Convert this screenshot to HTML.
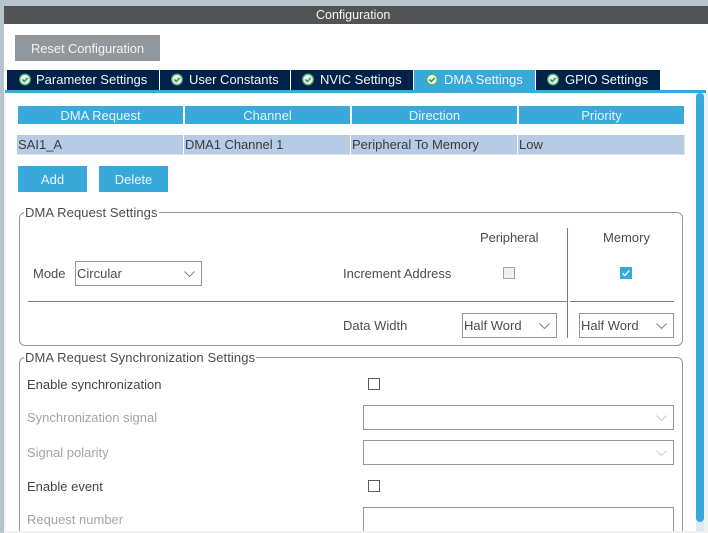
<!DOCTYPE html>
<html><head><meta charset="utf-8"><style>
html,body{margin:0;padding:0;background:#fff;width:708px;height:533px;overflow:hidden}
#w{position:absolute;left:0;top:0;width:708px;height:533px;overflow:hidden;font:13px/16px "Liberation Sans",Arial,sans-serif;color:#4f4a52}
.a{position:absolute;white-space:nowrap}
.box{position:absolute;box-sizing:border-box}
.tab{position:absolute;top:70px;height:20px;background:#002149;color:#f2f5f8;line-height:19px;white-space:nowrap}
.tab svg{position:absolute;left:0;top:3px}
.th{position:absolute;top:106px;height:18px;background:#39a9dc;color:#eaf5fb;text-align:center;line-height:20px}
.td{position:absolute;top:135px;height:19px;background:#b6cce4;color:#3d3a46;line-height:20px;padding-left:1px;box-sizing:border-box;white-space:nowrap}
.btn{position:absolute;top:166px;height:26px;width:69px;background:#39a9dc;color:#eaf5fb;text-align:center;line-height:28px}
.sel{position:absolute;box-sizing:border-box;border:1px solid #92979c;height:25px;background:#fff;line-height:23px;padding-left:1px;color:#4f4a52;white-space:nowrap}
.sel svg{position:absolute;right:6px;top:9px}
.l{position:absolute;white-space:nowrap;line-height:18px}
.g{color:#a5a3a8}
.d{color:#45414d}
.group{position:absolute;box-sizing:border-box;border:1px solid #92979c;border-radius:6px}
.leg{position:absolute;background:#fff;white-space:nowrap;padding:0 1px;line-height:18px;height:16px;letter-spacing:.09px}
.cb{position:absolute;box-sizing:border-box;width:12px;height:12px;border:1px solid #5c5c5c;background:#fff}
</style></head><body><div id="w">
<div class="box" style="left:4px;top:93px;width:2px;height:440px;background:#f0f2f4"></div>
<div class="box" style="left:0;top:0;width:708px;height:6px;background:#b8c4cc"></div>
<div class="box" style="left:0;top:0;width:4px;height:533px;background:#b8c4cc"></div>
<div class="box" style="left:4px;top:6px;width:704px;height:18px;background:#525354"></div>
<div class="a" style="left:316px;top:7px;color:#f4f4f4;font-size:12.5px">Configuration</div>

<div class="box" style="left:15px;top:35px;width:145px;height:26px;background:#92979c"></div>
<div class="a" style="left:31px;top:41px;color:#f2f3f4;letter-spacing:-.1px">Reset Configuration</div>

<div class="box" style="left:5px;top:90px;width:701px;height:3px;background:#39a9dc"></div>

<div class="tab" style="left:7px;width:152px"><svg style="left:10.500px" width="14" height="14" viewBox="0 0 14 14"><circle cx="7" cy="6.500" r="5.300" fill="#e9f4ec" stroke="#52ad70" stroke-width="1.300"/><path d="M4.300 6.500l2 2 3.400-3.600" fill="none" stroke="#3f9f60" stroke-width="1.700"/></svg><span class="a" style="left:29px;top:0">Parameter Settings</span></div>
<div class="tab" style="left:160px;width:130px"><svg style="left:10px" width="14" height="14" viewBox="0 0 14 14"><circle cx="7" cy="6.500" r="5.300" fill="#e9f4ec" stroke="#52ad70" stroke-width="1.300"/><path d="M4.300 6.500l2 2 3.400-3.600" fill="none" stroke="#3f9f60" stroke-width="1.700"/></svg><span class="a" style="left:29px;top:0">User Constants</span></div>
<div class="tab" style="left:291px;width:122px"><svg style="left:10px" width="14" height="14" viewBox="0 0 14 14"><circle cx="7" cy="6.500" r="5.300" fill="#e9f4ec" stroke="#52ad70" stroke-width="1.300"/><path d="M4.300 6.500l2 2 3.400-3.600" fill="none" stroke="#3f9f60" stroke-width="1.700"/></svg><span class="a" style="left:29px;top:0">NVIC Settings</span></div>
<div class="tab" style="left:414px;width:121px;background:#39a9dc"><svg style="left:11px" width="14" height="14" viewBox="0 0 14 14"><circle cx="7" cy="6.500" r="5.300" fill="#e9f4ec" stroke="#52ad70" stroke-width="1.300"/><path d="M4.300 6.500l2 2 3.400-3.600" fill="none" stroke="#3f9f60" stroke-width="1.700"/></svg><span class="a" style="left:30px;top:0">DMA Settings</span></div>
<div class="tab" style="left:536px;width:124px"><svg style="left:10px" width="14" height="14" viewBox="0 0 14 14"><circle cx="7" cy="6.500" r="5.300" fill="#e9f4ec" stroke="#52ad70" stroke-width="1.300"/><path d="M4.300 6.500l2 2 3.400-3.600" fill="none" stroke="#3f9f60" stroke-width="1.700"/></svg><span class="a" style="left:29px;top:0">GPIO Settings</span></div>

<div class="th" style="left:18px;width:165px">DMA Request</div>
<div class="th" style="left:185px;width:165px">Channel</div>
<div class="th" style="left:352px;width:165px">Direction</div>
<div class="th" style="left:519px;width:165px">Priority</div>

<div class="box" style="left:17px;top:154px;width:668px;height:1px;background:#dfe3e8"></div>
<div class="box" style="left:684px;top:135px;width:1px;height:20px;background:#dfe3e8"></div>
<div class="td" style="left:17px;width:166px">SAI1_A</div>
<div class="td" style="left:184px;width:166px;letter-spacing:-.05px">DMA1 Channel 1</div>
<div class="td" style="left:351px;width:166px">Peripheral To Memory</div>
<div class="td" style="left:518px;width:166px">Low</div>

<div class="btn" style="left:18px">Add</div>
<div class="btn" style="left:99px">Delete</div>

<div class="group" style="left:19px;top:212px;width:664px;height:134px"></div>
<div class="leg" style="left:24px;top:204px">DMA Request Settings</div>
<div class="l" style="left:33px;top:265px">Mode</div>
<div class="sel" style="left:75px;top:261px;width:127px">Circular<svg width="11" height="6" viewBox="0 0 11 6"><path d="M.5 .5l5 5 5-5" fill="none" stroke="#808080" stroke-width="1"/></svg></div>
<div class="l" style="left:343px;top:265px">Increment Address</div>
<div class="l" style="left:480px;top:229px;letter-spacing:-.08px">Peripheral</div>
<div class="l" style="left:603px;top:229px">Memory</div>
<div class="box" style="left:503px;top:267px;width:12px;height:12px;background:#eef0f2;border:1px solid #a0a2a6"></div>
<div class="box" style="left:620px;top:267px;width:12px;height:12px;background:#39a9dc"></div>
<svg class="a" style="left:620px;top:267px" width="12" height="12" viewBox="0 0 12 12"><path d="M2.500 6.200l2.300 2.300 4.500-5" fill="none" stroke="#fff" stroke-width="1.300"/></svg>
<div class="box" style="left:28px;top:301px;width:646px;height:1px;background:#6a7bb0"></div>
<div class="box" style="left:567px;top:228px;width:1px;height:110px;background:#6a7bb0"></div>
<div class="box" style="left:568px;top:301px;width:2px;height:1px;background:#fff"></div>
<div class="l" style="left:343px;top:317px">Data Width</div>
<div class="sel" style="left:462px;top:313px;width:95px">Half Word<svg width="11" height="6" viewBox="0 0 11 6"><path d="M.5 .5l5 5 5-5" fill="none" stroke="#808080" stroke-width="1"/></svg></div>
<div class="sel" style="left:579px;top:313px;width:95px">Half Word<svg width="11" height="6" viewBox="0 0 11 6"><path d="M.5 .5l5 5 5-5" fill="none" stroke="#808080" stroke-width="1"/></svg></div>

<div class="group" style="left:19px;top:357px;width:664px;height:190px"></div>
<div class="leg" style="left:24px;top:349px">DMA Request Synchronization Settings</div>
<div class="l d" style="left:27px;top:376px">Enable synchronization</div>
<div class="l g" style="left:27px;top:409px">Synchronization signal</div>
<div class="l g" style="left:27px;top:444px">Signal polarity</div>
<div class="l d" style="left:27px;top:478px">Enable event</div>
<div class="l g" style="left:27px;top:511px">Request number</div>
<div class="cb" style="left:368px;top:378px"></div>
<div class="sel" style="left:363px;top:405px;width:311px"><svg width="11" height="6" viewBox="0 0 11 6"><path d="M.5 .5l5 5 5-5" fill="none" stroke="#ccc" stroke-width="1"/></svg></div>
<div class="sel" style="left:363px;top:440px;width:311px"><svg width="11" height="6" viewBox="0 0 11 6"><path d="M.5 .5l5 5 5-5" fill="none" stroke="#ccc" stroke-width="1"/></svg></div>
<div class="cb" style="left:368px;top:480px"></div>
<div class="sel" style="left:363px;top:507px;width:311px;height:25px"></div>

<div class="box" style="left:696px;top:93px;width:8px;height:438px;background:#dce9f5"></div>
<div class="box" style="left:696px;top:93px;width:8px;height:429px;background:#39a9dc;border-radius:4px"></div>
<div class="box" style="left:704px;top:93px;width:4px;height:440px;background:#f0f0f0"></div>
<div class="box" style="left:4px;top:531px;width:704px;height:2px;background:#f0f0f0"></div>
</div></body></html>
